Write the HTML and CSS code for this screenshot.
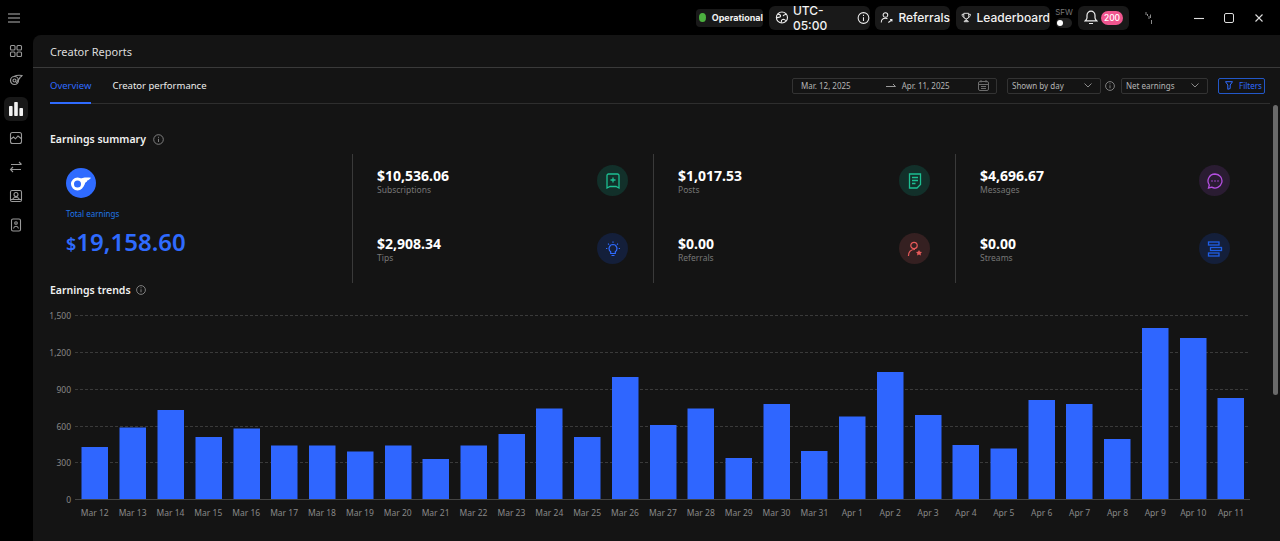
FILE: index.html
```html
<!DOCTYPE html>
<html lang="en">
<head>
<meta charset="utf-8">
<title>Creator Reports</title>
<link rel="stylesheet" href="styles.css">
</head>
<body>
<header class="topbar">
  <button class="menu-btn" aria-label="Menu"><svg width="14" height="12" viewBox="0 0 14 12"><path d="M1 2h12M1 6h12M1 10h12" stroke="#b4b4b4" stroke-width="1.2"/></svg></button>
  <div class="top-actions">
    <div class="status"><span class="status-dot"></span><span>Operational</span></div>
    <div class="chip chip-utc">
      <svg width="15" height="15" viewBox="0 0 15 15" fill="none" stroke="#eee" stroke-width="1.2"><circle cx="7.5" cy="7.5" r="6"/><path d="M3 3.8c2 .2 3.2 1 3 2.4-.2 1.2-2.6 1-4.4 1.6M12.5 4c-1.800.6-3.500.8-3.800 2M7 13c-.5-2 .2-3.400 2-3.600 1.200 0 2 .6 2.600 1.600"/></svg>
      <span>UTC-05:00</span>
      <svg width="14" height="14" viewBox="0 0 14 14" fill="none" stroke="#eee" stroke-width="1.1"><circle cx="7" cy="7" r="5.800"/><path d="M7 6.200v4M7 3.500v1.300"/></svg>
    </div>
    <div class="chip chip-ref">
      <svg width="16" height="15" viewBox="0 0 16 15" fill="none" stroke="#eee" stroke-width="1.2"><circle cx="6.500" cy="4.500" r="2.800"/><path d="M1.500 13.500c0-3 2-5 5-5 1 0 1.800.2 2.500.6M10 13.500l4-3M12 10h2.300v2.300"/></svg>
      <span>Referrals</span>
    </div>
    <div class="chip chip-lead">
      <svg width="15" height="15" viewBox="0 0 15 15" fill="none" stroke="#eee" stroke-width="1.300"><path d="M4 1.500h7v4.500a3.500 3.500 0 0 1-7 0zM4 3H1.500c0 2.500 1 4 3 4.200M11 3h2.500c0 2.500-1 4-3 4.200M7.500 9.500v2.500M4.500 13.500h6l-.8-1.500H5.300z"/></svg>
      <span>Leaderboard</span>
    </div>
    <div class="sfw">
      <span class="sfw-label">SFW</span>
      <span class="sfw-toggle"><span class="sfw-knob"></span></span>
    </div>
    <div class="chip chip-bell">
      <svg width="14" height="15" viewBox="0 0 14 15" fill="none" stroke="#eee" stroke-width="1.200"><path d="M7 1.200a4 4 0 0 0-4 4v2.600c0 1.400-.8 2.200-1.700 3h11.400c-.9-.8-1.700-1.600-1.700-3V5.200a4 4 0 0 0-4-4zM5 13.500h4"/></svg>
      <span class="badge">200</span>
    </div>
    <svg class="glitch" width="8" height="14" viewBox="0 0 8 14" fill="none" stroke="#8a8a8a" stroke-width="1"><path d="M1 1v3M2.500 3v2M4 5v3M5.500 3.500V7M6.500 9v4"/></svg>
    <div class="win-controls">
      <svg width="10" height="10" viewBox="0 0 10 10"><path d="M0 5.500h10" stroke="#ddd" stroke-width="1.100"/></svg>
      <svg width="10" height="10" viewBox="0 0 10 10" fill="none"><rect x=".5" y=".5" width="9" height="9" rx="1.500" stroke="#ddd"/></svg>
      <svg width="10" height="10" viewBox="0 0 10 10"><path d="M1.500 1.500l7 7M8.500 1.500l-7 7" stroke="#ddd" stroke-width="1.100"/></svg>
    </div>
  </div>
</header>

<div class="shell">
  <nav class="sidebar">
    <a class="nav-item"><svg width="14" height="14" viewBox="0 0 14 14" fill="none" stroke="#9a9a9a" stroke-width="1.100"><rect x="1.500" y="1.500" width="4.500" height="4.500" rx="1"/><rect x="8" y="1.500" width="4.500" height="4.500" rx="1"/><rect x="1.500" y="8" width="4.500" height="4.500" rx="1"/><rect x="8" y="8" width="4.500" height="4.500" rx="1"/></svg></a>
    <a class="nav-item"><svg width="14" height="14" viewBox="0 0 14 14" fill="none" stroke="#9a9a9a" stroke-width="1.200"><circle cx="5.500" cy="7.500" r="4"/><circle cx="5.500" cy="7.500" r="1.500"/><path d="M5 3.500c2-1.200 5-1.500 8-1-.5 1-1.200 1.500-2 1.800 0 1-.8 2-1.800 2.400-.4 1.400-1.200 2.600-2.200 3.300"/></svg></a>
    <a class="nav-item nav-active"><svg width="14" height="14" viewBox="0 0 14 14" fill="#f2f2f2"><rect x="0" y="4" width="3.600" height="10" rx=".8"/><rect x="5.200" y="0" width="3.600" height="14" rx=".8"/><rect x="10.400" y="6" width="3.600" height="8" rx=".8"/></svg></a>
    <a class="nav-item"><svg width="14" height="14" viewBox="0 0 14 14" fill="none" stroke="#9a9a9a" stroke-width="1.100"><rect x="1.500" y="1.500" width="11" height="11" rx="2"/><path d="M2 8l2.500-2 2 1.800L9 5l3.200 2.500"/></svg></a>
    <a class="nav-item"><svg width="14" height="14" viewBox="0 0 14 14" fill="none" stroke="#9a9a9a" stroke-width="1.100"><path d="M2 4.500h10.500M10 2l2.500 2.500M12 9.500H1.500M4 7L1.500 9.500 4 12"/></svg></a>
    <a class="nav-item"><svg width="14" height="14" viewBox="0 0 14 14" fill="none" stroke="#9a9a9a" stroke-width="1.100"><rect x="1.500" y="1.500" width="11" height="11" rx="1.500"/><circle cx="7" cy="5.500" r="2"/><path d="M3.500 10.500c.5-1.500 1.800-2.200 3.500-2.200s3 .7 3.500 2.200M2 10.500h10"/></svg></a>
    <a class="nav-item"><svg width="14" height="14" viewBox="0 0 14 14" fill="none" stroke="#9a9a9a" stroke-width="1.100"><rect x="2.500" y="1" width="9" height="12" rx="1.500"/><circle cx="7" cy="5" r="1.300"/><path d="M4.500 10.500c.3-1.500 1.200-2.300 2.500-2.300s2.200.8 2.500 2.300"/></svg></a>
  </nav>

  <main class="panel">
    <div class="panel-title">Creator Reports</div>

    <div class="toolbar">
      <div class="tabs">
        <span class="tab tab-active">Overview</span>
        <span class="tab">Creator performance</span>
      </div>
      <div class="filters">
        <div class="field field-date">
          <span class="date-from">Mar. 12, 2025</span>
          <svg class="date-arrow" width="10" height="5" viewBox="0 0 10 5" fill="none" stroke="#9a9a9a"><path d="M0 3.500h9.500M7 1l2.500 2.500"/></svg>
          <span class="date-to">Apr. 11, 2025</span>
          <svg class="date-cal" width="11" height="11" viewBox="0 0 11 11" fill="none" stroke="#6d6d6d"><rect x=".5" y="1.500" width="10" height="9" rx="1.500"/><path d="M.5 4.500h10M3 0v2.500M8 0v2.500M3 6.500h5M3 8.500h5"/></svg>
        </div>
        <div class="field field-shown">
          <span>Shown by day</span>
          <svg width="8" height="5" viewBox="0 0 8 5" fill="none" stroke="#8a8a8a"><path d="M.5.500L4 4 7.500.500"/></svg>
        </div>
        <svg class="filters-info" width="10" height="10" viewBox="0 0 10 10" fill="none" stroke="#8a8a8a" stroke-width=".9"><circle cx="5" cy="5" r="4.400"/><path d="M5 4.300v3M5 2.300v1"/></svg>
        <div class="field field-net">
          <span>Net earnings</span>
          <svg width="8" height="5" viewBox="0 0 8 5" fill="none" stroke="#8a8a8a"><path d="M.5.500L4 4 7.500.500"/></svg>
        </div>
        <div class="filter-btn">
          <svg width="8" height="9" viewBox="0 0 8 9" fill="none" stroke="#2f6bff"><path d="M.5.700h7L5.200 4v3.500L2.800 8.300V4z"/></svg>
          <span>Filters</span>
        </div>
      </div>
    </div>

    <div class="content">
      <h2 class="section-title">Earnings summary <svg width="11" height="11" viewBox="0 0 11 11" fill="none" stroke="#8a8a8a" stroke-width=".9"><circle cx="5.500" cy="5.500" r="4.800"/><path d="M5.500 4.800v3.200M5.500 2.800v1"/></svg></h2>

      <section class="summary">
        <div class="total">
          <svg class="of-logo" width="30" height="30" viewBox="0 0 30 30"><circle cx="15" cy="15" r="15" fill="#2f6bff"/><circle cx="11.500" cy="16" r="5" fill="none" stroke="#fff" stroke-width="3"/><path d="M13 11c3-1.500 8-2 12-1.200-1 1.600-2.400 2.400-3.800 2.800 0 1-.8 1.800-2 2.200-.6 3-2.400 5-5 6 2-2 2.400-6 1-7.500-.6-.8-1.300-1.500-2.200-2.300z" fill="#fff"/></svg>
          <div class="total-label">Total earnings</div>
          <div class="total-value"><span class="total-currency">$</span>19,158.60</div>
        </div>

        <div class="stat-col">
          <div class="stat">
            <div><div class="stat-value">$10,536.06</div><div class="stat-label">Subscriptions</div></div>
            <span class="stat-icon icon-green"><svg width="16" height="16" viewBox="0 0 16 16" fill="none" stroke="#1dbf92" stroke-width="1.300"><path d="M2 2.500a1.500 1.500 0 0 1 1.500-1.500h9a1.500 1.500 0 0 1 1.500 1.500V15l-3-1.500H5L2 15zM8 4.500v5M5.500 7h5"/></svg></span>
          </div>
          <div class="stat">
            <div><div class="stat-value">$2,908.34</div><div class="stat-label">Tips</div></div>
            <span class="stat-icon icon-blue"><svg width="16" height="16" viewBox="0 0 16 16" fill="none" stroke="#2f6bff" stroke-width="1.200"><path d="M8 3.500a4 4 0 0 0-2.300 7.200v1.800h4.600v-1.800A4 4 0 0 0 8 3.500zM6.500 14.500h3M8 .5v1.300M1 7.500h1.300M13.700 7.500H15M3 2.700l1 1M13 2.700l-1 1"/></svg></span>
          </div>
        </div>

        <div class="stat-col">
          <div class="stat">
            <div><div class="stat-value">$1,017.53</div><div class="stat-label">Posts</div></div>
            <span class="stat-icon icon-green"><svg width="16" height="16" viewBox="0 0 16 16" fill="none" stroke="#1dbf92" stroke-width="1.300"><path d="M2.500 1h11v10.500l-3.500 3.500H2.500zM5 4.500h6M5 7.500h6M5 10.500h3.500"/></svg></span>
          </div>
          <div class="stat">
            <div><div class="stat-value">$0.00</div><div class="stat-label">Referrals</div></div>
            <span class="stat-icon icon-red"><svg width="16" height="16" viewBox="0 0 16 16" fill="none" stroke="#e85a5a" stroke-width="1.200"><circle cx="7" cy="4.500" r="3.200"/><path d="M1.500 15c0-4 2-6.500 6.500-6.500"/><path d="M12 9l1 1.700 2 .3-1.400 1.500.3 2-1.900-.9-1.900.9.3-2L9 11l2-.3z" fill="#e85a5a" stroke="none"/></svg></span>
          </div>
        </div>

        <div class="stat-col">
          <div class="stat">
            <div><div class="stat-value">$4,696.67</div><div class="stat-label">Messages</div></div>
            <span class="stat-icon icon-purple"><svg width="16" height="16" viewBox="0 0 16 16" fill="none" stroke="#b44fe0" stroke-width="1.300"><path d="M8 1a7 7 0 1 1-3.300 13.200L1.500 15l.8-3A7 7 0 0 1 8 1z"/><path d="M5 8h.01M8 8h.01M11 8h.01" stroke-width="1.500" stroke-linecap="round"/></svg></span>
          </div>
          <div class="stat">
            <div><div class="stat-value">$0.00</div><div class="stat-label">Streams</div></div>
            <span class="stat-icon icon-navy"><svg width="16" height="16" viewBox="0 0 16 16" fill="none" stroke="#1f5fe6" stroke-width="1.300"><rect x="1.500" y="1" width="10.500" height="3"/><rect x="3.500" y="6.500" width="11" height="3"/><rect x="1.500" y="12" width="10.500" height="3"/></svg></span>
          </div>
        </div>
      </section>

      <h2 class="section-title section-trends">Earnings trends <svg width="10" height="10" viewBox="0 0 10 10" fill="none" stroke="#8a8a8a" stroke-width=".9"><circle cx="5" cy="5" r="4.400"/><path d="M5 4.300v3M5 2.300v1"/></svg></h2>

      <svg class="chart" width="1203" height="225" viewBox="47 305 1203 225">
        <g class="grid-lines">
          <path d="M75 315.500H1250M75 352.500H1250M75 389.500H1250M75 426.500H1250M75 462.500H1250"/>
        </g>
        <g class="y-labels">
          <text x="71" y="318.500">1,500</text>
          <text x="71" y="355.500">1,200</text>
          <text x="71" y="392.500">900</text>
          <text x="71" y="429.500">600</text>
          <text x="71" y="465.500">300</text>
          <text x="71" y="502.500">0</text>
        </g>
        <g class="bars">
          <rect x="81.500" y="447" width="26.500" height="52.500"/>
          <rect x="119.500" y="427.500" width="26.500" height="72"/>
          <rect x="157.500" y="410" width="26.500" height="89.500"/>
          <rect x="195.500" y="437" width="26.500" height="62.500"/>
          <rect x="233.500" y="428.500" width="26.500" height="71"/>
          <rect x="271" y="445.500" width="26.500" height="54"/>
          <rect x="309" y="445.500" width="26.500" height="54"/>
          <rect x="347" y="451.500" width="26.500" height="48"/>
          <rect x="385" y="445.500" width="26.500" height="54"/>
          <rect x="422.500" y="459" width="26.500" height="40.500"/>
          <rect x="460.500" y="445.500" width="26.500" height="54"/>
          <rect x="498.500" y="434" width="26.500" height="65.500"/>
          <rect x="536" y="408.500" width="26.500" height="91"/>
          <rect x="574" y="437" width="26.500" height="62.500"/>
          <rect x="612" y="377" width="26.500" height="122.500"/>
          <rect x="650" y="425" width="26.500" height="74.500"/>
          <rect x="687.500" y="408.500" width="26.500" height="91"/>
          <rect x="725.500" y="458" width="26.500" height="41.500"/>
          <rect x="763.500" y="404" width="26.500" height="95.500"/>
          <rect x="801" y="451" width="26.500" height="48.500"/>
          <rect x="839" y="416.500" width="26.500" height="83"/>
          <rect x="877" y="372" width="26.500" height="127.500"/>
          <rect x="915" y="415" width="26.500" height="84.500"/>
          <rect x="952.500" y="445" width="26.500" height="54.500"/>
          <rect x="990.500" y="448.500" width="26.500" height="51"/>
          <rect x="1028.500" y="400" width="26.500" height="99.500"/>
          <rect x="1066" y="404" width="26.500" height="95.500"/>
          <rect x="1104" y="439" width="26.500" height="60.500"/>
          <rect x="1142" y="328" width="26.500" height="171.500"/>
          <rect x="1180" y="338" width="26.500" height="161.500"/>
          <rect x="1217.500" y="398" width="26.500" height="101.500"/>
        </g>
        <path class="axis" d="M75 499.500H1250"/>
        <g class="x-labels">
          <text x="94.700" y="516">Mar 12</text>
          <text x="132.600" y="516">Mar 13</text>
          <text x="170.500" y="516">Mar 14</text>
          <text x="208.300" y="516">Mar 15</text>
          <text x="246.200" y="516">Mar 16</text>
          <text x="284.100" y="516">Mar 17</text>
          <text x="322" y="516">Mar 18</text>
          <text x="359.900" y="516">Mar 19</text>
          <text x="397.700" y="516">Mar 20</text>
          <text x="435.600" y="516">Mar 21</text>
          <text x="473.500" y="516">Mar 22</text>
          <text x="511.400" y="516">Mar 23</text>
          <text x="549.300" y="516">Mar 24</text>
          <text x="587.100" y="516">Mar 25</text>
          <text x="625" y="516">Mar 26</text>
          <text x="662.900" y="516">Mar 27</text>
          <text x="700.800" y="516">Mar 28</text>
          <text x="738.700" y="516">Mar 29</text>
          <text x="776.500" y="516">Mar 30</text>
          <text x="814.400" y="516">Mar 31</text>
          <text x="852.300" y="516">Apr 1</text>
          <text x="890.200" y="516">Apr 2</text>
          <text x="928.100" y="516">Apr 3</text>
          <text x="965.900" y="516">Apr 4</text>
          <text x="1003.800" y="516">Apr 5</text>
          <text x="1041.700" y="516">Apr 6</text>
          <text x="1079.600" y="516">Apr 7</text>
          <text x="1117.500" y="516">Apr 8</text>
          <text x="1155.300" y="516">Apr 9</text>
          <text x="1193.200" y="516">Apr 10</text>
          <text x="1231" y="516">Apr 11</text>
        </g>
      </svg>
    </div>
    <div class="scrollbar"></div>
  </main>
</div>
</body>
</html>
```
FILE: styles.css
```css
* { box-sizing: border-box; }
html, body { margin: 0; height: 100%; }
body {
  width: 1280px;
  height: 541px;
  overflow: hidden;
  background: #000;
  color: #eee;
  font-family: "Noto Sans", "Open Sans", sans-serif;
  display: flex;
  flex-direction: column;
}

/* top bar */
.topbar {
  height: 35px;
  flex: none;
  display: flex;
  align-items: center;
  justify-content: space-between;
  padding-left: 7px;
}
.menu-btn { background: none; border: 0; padding: 0; display: flex; width: 14px; height: 12px; }
.top-actions { display: flex; align-items: center; height: 100%; font-family: Inter, "Liberation Sans", sans-serif; }
.status {
  display: flex; align-items: center; gap: 6px;
  width: 67px; height: 18px; padding-left: 3px;
  margin-right: 6px;
  background: #191919; border-radius: 4px;
  font-size: 9px; font-weight: 700; color: #f2f2f2;
}
.status-dot { width: 9px; height: 9px; border-radius: 50%; background: #4caf3f; }
.chip {
  display: flex; align-items: center;
  height: 24px;
  background: #191919; border-radius: 6px;
  font-size: 12px; font-weight: 500; color: #f2f2f2;
}
.chip-utc { width: 101px; padding-left: 6px; gap: 4px; margin-right: 5px; }
.chip-ref { width: 75px; padding-left: 5px; gap: 5px; margin-right: 6px; }
.chip-lead { width: 94px; padding-left: 5px; gap: 5px; margin-right: 5px; }
.chip-bell { width: 51px; padding-left: 6px; gap: 3px; margin-right: 16px; }
.sfw { width: 18px; display: flex; flex-direction: column; align-items: center; gap: 1px; margin-right: 5px; }
.sfw-label { font-size: 8px; line-height: 10px; color: #777; }
.sfw-toggle { width: 16px; height: 10px; border-radius: 5px; background: #1f1f1f; display: flex; align-items: center; padding-left: 1px; }
.sfw-knob { width: 6px; height: 6px; border-radius: 50%; background: #fff; }
.badge {
  width: 22px; height: 14px; border-radius: 7px;
  background: #f0568f; color: #fff;
  font-size: 8.500px; font-weight: 500; line-height: 14px; text-align: center;
}
.glitch { margin-right: 41px; }
.win-controls { display: flex; align-items: center; gap: 20px; padding-right: 16px; }

/* shell */
.shell { flex: 1; display: flex; min-height: 0; }
.sidebar { width: 33px; flex: none; display: flex; flex-direction: column; align-items: center; padding: 4px 1px 0 0; gap: 5px; }
.nav-item { width: 24px; height: 24px; display: flex; align-items: center; justify-content: center; border-radius: 6px; }
.nav-active { background: #181818; }

.panel {
  position: relative;
  flex: 1;
  min-width: 0;
  background: #141414;
  border-top-left-radius: 8px;
  overflow: hidden;
}
.panel-title {
  height: 33px;
  padding: 0 0 0 17px;
  border-bottom: 1px solid #3a3a3a;
  font-size: 11px;
  line-height: 33px;
  color: #dcdcdc;
}
.toolbar {
  height: 36px;
  margin: 0 10px 0 17px;
  display: flex;
  align-items: stretch;
  justify-content: space-between;
  border-bottom: 1px solid #2e2e2e;
}
.tabs { display: flex; gap: 21px; }
.tab { font-size: 9.500px; line-height: 36px; color: #eee; height: 36px; }
.tab-active { color: #2f6bff; box-shadow: inset 0 -2px 0 #2f6bff; }
.filters { display: flex; align-items: center; padding-right: 5px; }
.field {
  display: flex; align-items: center; justify-content: space-between;
  height: 16px;
  border: 1px solid #333;
  border-radius: 2px;
  font-size: 8px;
  color: #b4b4b4;
  padding: 0 4px;
}
.field-date { width: 205px; justify-content: flex-start; margin-right: 10px; padding: 0 8px; }
.date-arrow { margin-left: 35px; }
.date-to { margin-left: 6px; }
.date-cal { margin-left: auto; margin-right: -1px; }
.field-shown { width: 94px; margin-right: 4px; padding-right: 8px; }
.filters-info { margin-right: 6px; }
.field-net { width: 87px; margin-right: 10px; padding-right: 8px; }
.filter-btn {
  display: flex; align-items: center; gap: 6px;
  width: 47px; height: 16px;
  padding-left: 6px;
  border: 1px solid #2358c9; border-radius: 2px;
  font-size: 8px; color: #2f6bff;
}

/* content */
.content { padding: 26px 0 0 17px; }
.section-title {
  margin: 0;
  display: flex; align-items: center; gap: 7px;
  font-size: 10.500px; font-weight: 600; line-height: 18px; color: #f0f0f0;
}
.summary {
  margin-top: 6px;
  height: 120px;
  display: grid;
  grid-template-columns: 302px 301px 302px 300px;
}
.total { padding: 14px 0 0 16px; }
.of-logo { display: block; }
.total-label { margin-top: 10px; font-size: 8px; line-height: 12px; color: #1f75e8; }
.total-value { margin-top: 6px; font-size: 24px; font-weight: 600; line-height: 32px; color: #2f6bff; }
.total-currency { font-size: 18px; }
.stat-col {
  border-left: 1px solid #3a3a3a;
  padding: 13px 25px 0 24px;
  display: flex;
  flex-direction: column;
  gap: 20px;
}
.stat { height: 48px; display: flex; justify-content: space-between; align-items: flex-start; }
.stat-value { font-size: 14px; font-weight: 700; line-height: 17px; color: #fff; }
.stat-label { font-size: 8.500px; line-height: 11px; color: #777; margin-top: 0; }
.stat-icon { width: 31px; height: 31px; border-radius: 50%; display: flex; align-items: center; justify-content: center; margin-top: -2px; }
.icon-green { background: #12302a; }
.icon-blue { background: #141f3a; }
.icon-red { background: #352021; }
.icon-purple { background: #2a1c32; }
.icon-navy { background: #141f3a; }

.section-trends { margin-top: 7px; gap: 5px; }
.chart { display: block; margin: 6px 0 0 -3px; }
.grid-lines path { stroke: #3a3a3a; stroke-dasharray: 3 2; fill: none; }
.y-labels text { font-size: 8.500px; fill: #888; text-anchor: end; }
.x-labels text { font-size: 8.500px; fill: #888; text-anchor: middle; }
.bars rect { fill: #2f66ff; }
.axis { stroke: #444; fill: none; }

.scrollbar {
  position: absolute;
  top: 70px; right: 2px;
  width: 5px; height: 290px;
  border-radius: 3px;
  background: #6a6a6a;
}
```
